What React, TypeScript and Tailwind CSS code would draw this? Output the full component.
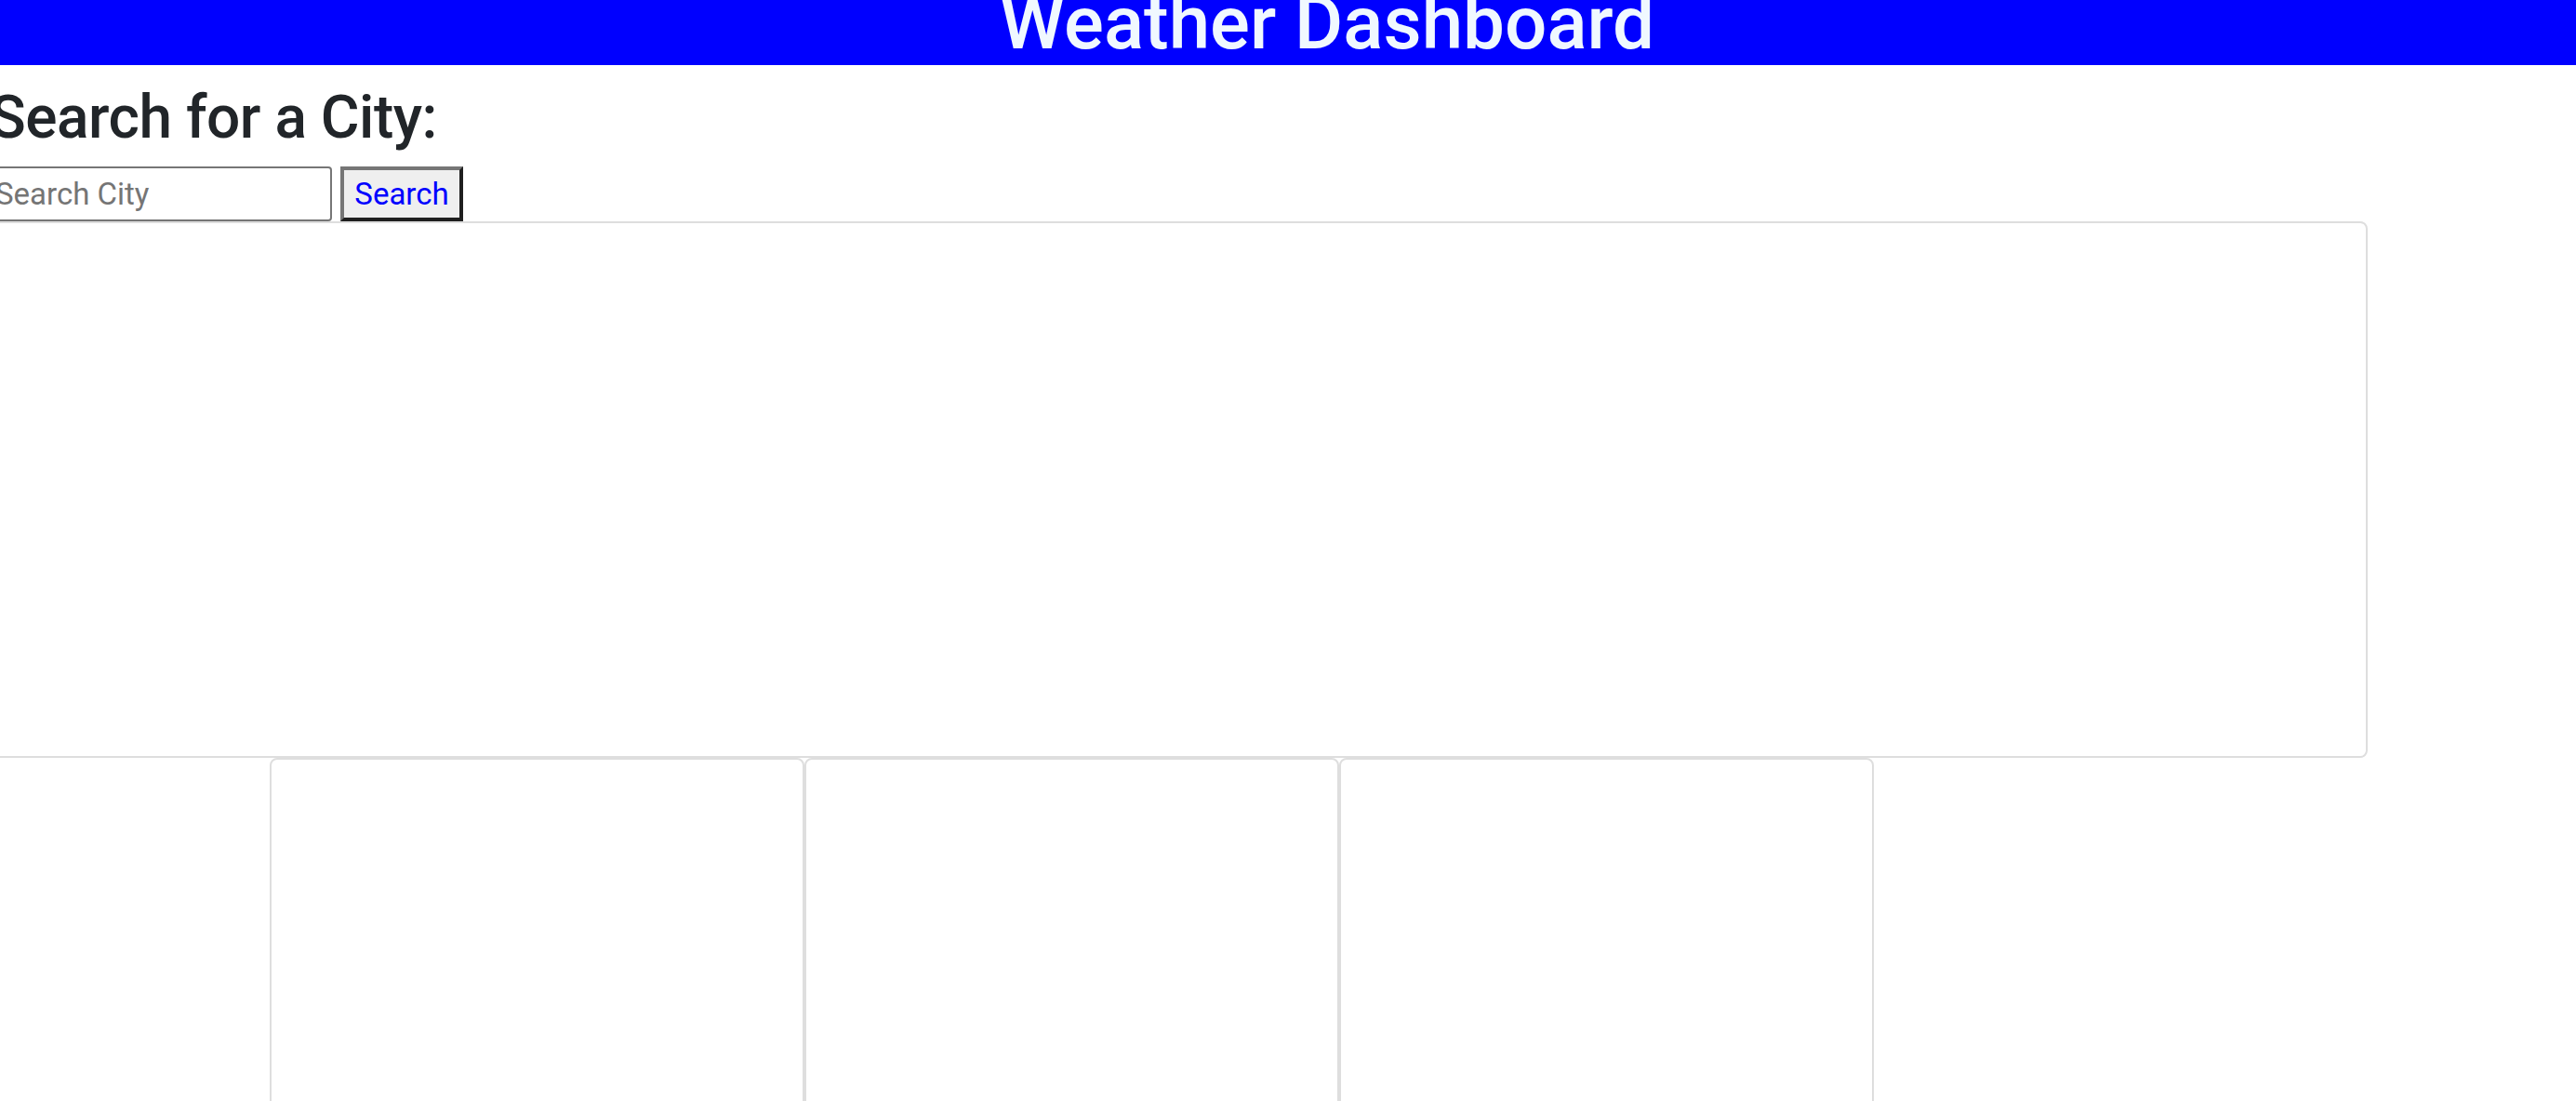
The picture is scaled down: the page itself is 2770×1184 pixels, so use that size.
import React from 'react';

const FORECAST_SLOTS = [1, 2, 3];

export default function App() {
  return (
    <div className="min-h-screen w-full overflow-hidden bg-white font-['Roboto',sans-serif] text-[#212529]">
      {/* Header */}
      <header className="flex h-[70px] justify-center overflow-hidden bg-[#0000ff] pl-[84px]">
        <h1 className="-mt-[15px] text-[80px] leading-[80px] font-medium whitespace-nowrap text-[#f0f8ff]">
          Weather Dashboard
        </h1>
      </header>

      <main className="-ml-[11px]">
        {/* Search */}
        <section>
          <h2 className="mt-[18px] mb-[14px] text-[64px] leading-[77px] font-medium tracking-[-0.5px] whitespace-nowrap">
            Search for a City:
          </h2>
          <div className="flex items-stretch gap-[9px]">
            <input
              type="text"
              placeholder="Search City"
              className="h-[59px] w-[368px] rounded-[4px] border-2 border-[#767676] bg-white px-[4px] text-[33px] text-[#212529] placeholder:text-[#757575] outline-none"
            />
            <button className="h-[59px] w-[132px] border-4 border-t-[#767676] border-l-[#767676] border-r-[#1f1f1f] border-b-[#1f1f1f] bg-[#efefef] text-[33px] leading-none text-[#0000ff]">
              Search
            </button>
          </div>
        </section>

        {/* Current weather */}
        <div className="h-[577px] w-[2557px] rounded-[8px] border-2 border-[#dedede]" />

        {/* Forecast */}
        <div className="flex pl-[301px]">
          {FORECAST_SLOTS.map((slot) => (
            <div key={slot} className="h-[420px] w-[575px] rounded-[8px] border-2 border-[#dedede]" />
          ))}
        </div>
      </main>
    </div>
  );
}
